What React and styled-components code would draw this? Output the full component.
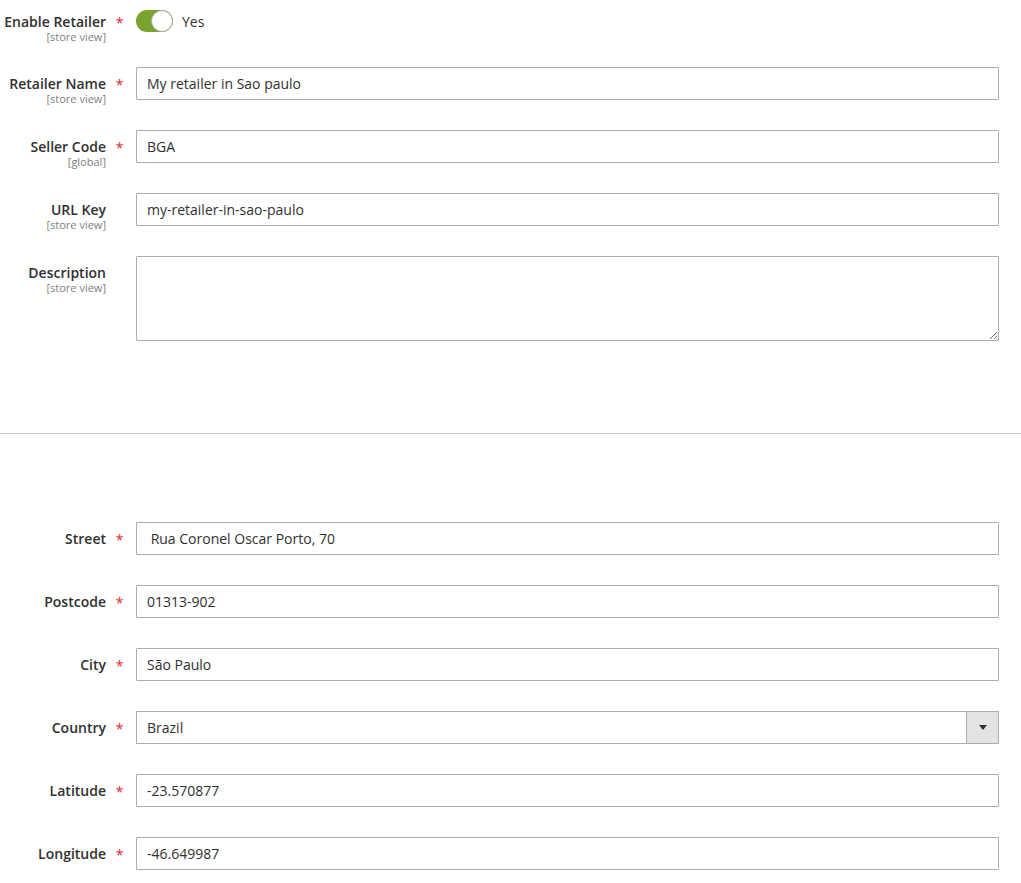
import React from "react";
import styled, { createGlobalStyle } from "styled-components";

const GlobalStyle = createGlobalStyle`
  html, body {
    margin: 0;
    padding: 0;
    background: #fff;
    font-family: "Open Sans", "Noto Sans", sans-serif;
    color: #303030;
  }
`;

const Page = styled.div`
  width: 1021px;
  padding-top: 5px;
`;

const Fieldset = styled.div`
  display: flex;
  flex-direction: column;
  gap: 30px;
  padding: 0 22px 0 0;
`;

const Divider = styled.hr`
  border: 0;
  border-top: 1px solid #cccccc;
  margin: ${(p) => p.$top}px 0 ${(p) => p.$bottom}px;
`;

const Row = styled.div`
  display: flex;
  align-items: flex-start;
`;

const LabelCol = styled.div`
  width: 106px;
  text-align: right;
  padding-top: 7px;
  margin-bottom: -8px;
  flex-shrink: 0;
`;

const LabelText = styled.div`
  font-size: 14px;
  font-weight: 600;
  line-height: 19px;
  color: #303030;
`;

const Scope = styled.div`
  font-size: 11px;
  line-height: 12px;
  color: #808080;
`;

const Star = styled.div`
  width: 30px;
  flex-shrink: 0;
  padding-top: 7px;
  padding-right: 3px;
  box-sizing: border-box;
  text-align: center;
  font-size: 14px;
  line-height: 21px;
  color: #e22626;
  visibility: ${(p) => (p.$show ? "visible" : "hidden")};
`;

const Control = styled.div`
  flex: 1;
  display: flex;
  align-items: center;
  min-width: 0;
`;

const TextInput = styled.input`
  width: 100%;
  height: 33px;
  box-sizing: border-box;
  border: 1px solid #adadad;
  border-radius: 1px;
  padding: 0 10px;
  font-family: "Open Sans", "Noto Sans", sans-serif;
  font-size: 14px;
  color: #303030;
  background: #fff;
  outline: none;
`;

const TextArea = styled.textarea`
  width: 100%;
  height: 85px;
  box-sizing: border-box;
  border: 1px solid #adadad;
  border-radius: 1px;
  padding: 6px 10px;
  font-family: "Open Sans", "Noto Sans", sans-serif;
  font-size: 14px;
  color: #303030;
  outline: none;
  display: block;
`;

const SelectBox = styled.div`
  width: 100%;
  height: 33px;
  box-sizing: border-box;
  border: 1px solid #adadad;
  display: flex;
  background: #fff;
`;

const Select = styled.select`
  flex: 1;
  appearance: none;
  border: 0;
  background: transparent;
  padding: 0 10px;
  font-family: "Open Sans", "Noto Sans", sans-serif;
  font-size: 14px;
  color: #303030;
  outline: none;
`;

const Arrow = styled.div`
  width: 31px;
  border-left: 1px solid #adadad;
  background: #e3e3e3;
  display: flex;
  align-items: center;
  justify-content: center;
  &::after {
    content: "";
    border-left: 4px solid transparent;
    border-right: 4px solid transparent;
    border-top: 5px solid #303030;
  }
`;

const ToggleWrap = styled.div`
  display: flex;
  align-items: center;
  gap: 9px;
  height: 32px;
`;

const Toggle = styled.div`
  width: 37px;
  height: 22px;
  border-radius: 12px;
  background: #79a22e;
  position: relative;
  box-sizing: border-box;
  &::after {
    content: "";
    position: absolute;
    right: 0;
    top: 0;
    width: 22px;
    height: 22px;
    box-sizing: border-box;
    border-radius: 50%;
    background: #fff;
    border: 1px solid #adadad;
  }
`;

const ToggleText = styled.span`
  font-size: 14px;
  color: #303030;
`;

const Field = ({ label, scope, required, children }) => (
  <Row>
    <LabelCol>
      <LabelText>{label}</LabelText>
      {scope && <Scope>[{scope}]</Scope>}
    </LabelCol>
    <Star $show={required}>*</Star>
    <Control>{children}</Control>
  </Row>
);

const Text = ({ value }) => <TextInput readOnly value={value} />;

export default function App() {
  return (
    <Page>
      <GlobalStyle />
      <Fieldset>
        <Field label="Enable Retailer" scope="store view" required>
          <ToggleWrap>
            <Toggle />
            <ToggleText>Yes</ToggleText>
          </ToggleWrap>
        </Field>
        <Field label="Retailer Name" scope="store view" required>
          <Text value="My retailer in Sao paulo" />
        </Field>
        <Field label="Seller Code" scope="global" required>
          <Text value="BGA" />
        </Field>
        <Field label="URL Key" scope="store view">
          <Text value="my-retailer-in-sao-paulo" />
        </Field>
        <Field label="Description" scope="store view">
          <TextArea readOnly value="" />
        </Field>
      </Fieldset>
      <Divider $top={92} $bottom={88} />
      <Fieldset>
        <Field label="Street" required>
          <Text value=" Rua Coronel Oscar Porto, 70" />
        </Field>
        <Field label="Postcode" required>
          <Text value="01313-902" />
        </Field>
        <Field label="City" required>
          <Text value="São Paulo" />
        </Field>
        <Field label="Country" required>
          <SelectBox>
            <Select defaultValue="BR">
              <option value="BR">Brazil</option>
            </Select>
            <Arrow />
          </SelectBox>
        </Field>
        <Field label="Latitude" required>
          <Text value="-23.570877" />
        </Field>
        <Field label="Longitude" required>
          <Text value="-46.649987" />
        </Field>
      </Fieldset>
    </Page>
  );
}
